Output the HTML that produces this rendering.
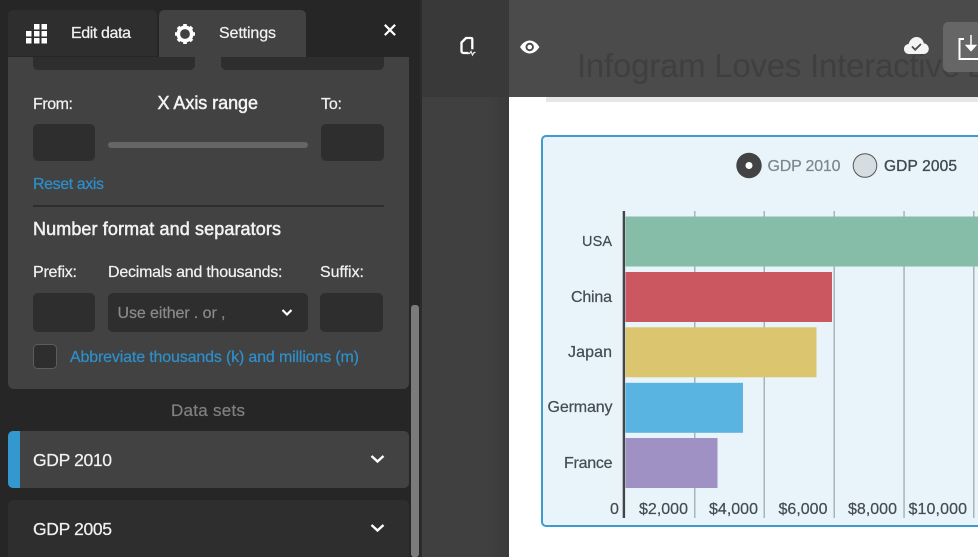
<!DOCTYPE html>
<html><head><meta charset="utf-8"><style>
html,body{margin:0;padding:0;width:978px;height:557px;overflow:hidden;background:#262626}
svg{display:block}
text{font-family:"Liberation Sans",sans-serif;font-size:16px;white-space:pre;stroke-width:.22px}
.w{fill:#f2f2f2;stroke:#f2f2f2}.b{fill:#2e8fca;stroke:#2e8fca}.c{fill:#434c52;stroke:#434c52}
.h{stroke-width:.5px}
</style></head><body>
<svg width="978" height="557" viewBox="0 0 978 557" xmlns="http://www.w3.org/2000/svg">
<defs><linearGradient id="g" x1="0" x2="1" y1="0" y2="0"><stop offset="0" stop-color="#404040"/><stop offset=".75" stop-color="#404040"/><stop offset="1" stop-color="#3a3a3a"/></linearGradient></defs>
<rect width="978" height="557" fill="#262626"/>
<!-- middle column -->
<rect x="420" width="2" height="557" fill="#2b2b2b"/>
<rect x="422" width="87" height="557" fill="url(#g)"/>
<rect x="422" width="87" height="97" fill="#393939"/>
<!-- page -->
<rect x="509" width="469" height="557" fill="#fff"/>
<rect x="546" y="97" width="432" height="5" fill="#e6e6e6"/>
<!-- header overlay -->
<rect x="509" width="469" height="97" fill="#4b4b4b"/>
<text x="577" y="77" style="font-size:33px;stroke:none" fill="#3f3f3f" textLength="383" lengthAdjust="spacing">Infogram Loves Interactive</text>
<text x="967" y="77" style="font-size:33px;stroke:none" fill="#3f3f3f">Data</text>
<rect x="943" y="22" width="50" height="50" rx="5" fill="#686868" fill-opacity=".93"/>
<path d="M964 39h-4.500v20h19" fill="none" stroke="#fff" stroke-width="2"/>
<path d="M971 35v14M966.500 45.500l4.500 5 4.500-5z" fill="#fff" stroke="#fff" stroke-width="1.500"/>
<!-- cloud -->
<path d="M909 54c-3 0-5-2.200-5-5 0-2.700 2-4.800 4.600-5 1-3.800 4-7 8-7 3.700 0 6.500 2.700 7.200 6.200 2.800.3 5 2.700 5 5.700 0 2.800-2.300 5.100-5 5.100z" fill="#f4f4f4"/>
<path d="M912 46.500l3.200 3.200 5.800-5.700" fill="none" stroke="#4b4b4b" stroke-width="1.800"/>
<!-- eye -->
<path d="M520 47c2.500-4 6-6.500 9.700-6.500s7.200 2.500 9.700 6.500c-2.500 4-6 6.500-9.700 6.500s-7.200-2.500-9.700-6.500z" fill="#fff"/>
<circle cx="529.700" cy="47" r="4.200" fill="#4b4b4b"/><circle cx="529.700" cy="47" r="2.300" fill="#fff"/>
<!-- phone -->
<path d="M468.500 53h-5c-1.200 0-2-.8-2-2v-8.500l4.500-4.500h5c.9 0 1.300.5 1.300 1.300v10" fill="none" stroke="#fff" stroke-width="2.300"/>
<path d="M467.500 53.500h2l1.500-2 1.500 3.500 1.500-2.500h1.500" fill="none" stroke="#eee" stroke-width="1.200"/>
<!-- chart -->
<rect x="542" y="136" width="460" height="390" rx="4" fill="#e9f4fa" stroke="#3f9ad0" stroke-width="2"/>
<g fill="#a8b4bb">
<rect x="694" y="211" width="1.500" height="307"/><rect x="763.500" y="211" width="1.500" height="307"/><rect x="833.500" y="211" width="1.500" height="307"/><rect x="903.300" y="211" width="1.500" height="307"/><rect x="973" y="211" width="1.500" height="307"/>
</g>
<rect x="622.700" y="211" width="2.400" height="307" fill="#434649"/>
<rect x="625.500" y="216.500" width="360" height="50" fill="#85bda9"/>
<rect x="625.500" y="272" width="206.500" height="50" fill="#cb5860"/>
<rect x="625.500" y="327.300" width="191" height="50" fill="#dcc56f"/>
<rect x="625.500" y="382.800" width="117.500" height="50" fill="#5ab4e2"/>
<rect x="625.500" y="438" width="92" height="50" fill="#a091c5"/>
<text x="582" y="246" class="c" style="font-size:14.500px" textLength="30">USA</text>
<text x="571" y="302" class="c" textLength="41">China</text>
<text x="568" y="357" class="c" textLength="44">Japan</text>
<text x="547.500" y="412" class="c" textLength="65">Germany</text>
<text x="564" y="468" class="c" textLength="48.500">France</text>
<text x="610" y="514" class="c" textLength="9">0</text>
<text x="639" y="514" class="c" textLength="49">$2,000</text>
<text x="709" y="514" class="c" textLength="49">$4,000</text>
<text x="778.500" y="514" class="c" textLength="49">$6,000</text>
<text x="848" y="514" class="c" textLength="49">$8,000</text>
<text x="908.500" y="514" class="c" textLength="58.500">$10,000</text>
<circle cx="749" cy="165.500" r="12.700" fill="#434343"/><circle cx="749" cy="165.500" r="3.500" fill="#fff"/>
<text x="767.500" y="171" fill="#7b868d" stroke="#7b868d" textLength="73">GDP 2010</text>
<circle cx="865" cy="165.500" r="11.800" fill="#d6dde1" stroke="#555" stroke-width="1"/>
<text x="884" y="171" fill="#3f4a52" textLength="73" stroke="#3f4a52" style="font-size:15.500px;stroke-width:.35px">GDP 2005</text>
<!-- tabs -->
<path d="M8 57V15a5 5 0 0 1 5-5h139a5 5 0 0 1 5 5v42z" fill="#2e2e2e"/>
<path d="M159 57V15a5 5 0 0 1 5-5h137a5 5 0 0 1 5 5v42z" fill="#424242"/>
<g fill="#fff">
<rect x="34" y="24" width="5.500" height="5.500"/><rect x="41.500" y="24" width="5.500" height="5.500"/>
<rect x="26" y="31" width="5.500" height="5.500"/><rect x="34" y="31" width="5.500" height="5.500"/><rect x="41.500" y="31" width="5.500" height="5.500"/>
<rect x="26" y="38" width="5.500" height="5.500"/><rect x="34" y="38" width="5.500" height="5.500"/><rect x="41.500" y="38" width="5.500" height="5.500"/>
</g>
<text x="71" y="38" class="w" textLength="60">Edit data</text>
<text x="219" y="38" class="w" textLength="57">Settings</text>
<!-- gear -->
<circle cx="185" cy="34" r="6.700" fill="none" stroke="#fff" stroke-width="3.600"/>
<g stroke="#fff" stroke-width="3.600" fill="none">
<path d="M185 24v3.500M185 40.500v3.500M175 34h3.500M191.500 34h3.500M178 27l2.400 2.400M189.600 38.600l2.400 2.400M192 27l-2.400 2.400M180.400 38.600L178 41"/>
</g>
<!-- close -->
<path d="M384.800 24.800l10.300 10.300M395.100 24.800L384.800 35.100" stroke="#fff" stroke-width="2.200" fill="none"/>
<!-- panel -->
<path d="M8 57h401v326a6 6 0 0 1-6 6H14a6 6 0 0 1-6-6z" fill="#424242"/>
<path d="M8 56.500h151" stroke="#272727" stroke-width="1"/>
<path d="M33 57h162v8a5 5 0 0 1-5 5H38a5 5 0 0 1-5-5z" fill="#2e2e2e"/>
<path d="M221 57h163v8a5 5 0 0 1-5 5H226a5 5 0 0 1-5-5z" fill="#2e2e2e"/>
<text x="33" y="109" class="w" textLength="40">From:</text>
<text x="157.500" y="109" class="w h" style="font-size:18px" textLength="100.500">X Axis range</text>
<text x="321" y="109" class="w" textLength="21">To:</text>
<rect x="33" y="124" width="62" height="37" rx="5" fill="#2e2e2e"/>
<rect x="321" y="124" width="63" height="37" rx="5" fill="#2e2e2e"/>
<rect x="108" y="142" width="200" height="6" rx="3" fill="#666"/>
<text x="33" y="189" class="b" textLength="71">Reset axis</text>
<rect x="33" y="205" width="351" height="2" fill="#2e2e2e"/>
<text x="33" y="235" class="w h" style="font-size:18px" textLength="248">Number format and separators</text>
<text x="33" y="277" class="w" textLength="44">Prefix:</text>
<text x="108" y="277" class="w" textLength="174.500">Decimals and thousands:</text>
<text x="320" y="277" class="w" textLength="44">Suffix:</text>
<rect x="33" y="293" width="62" height="39" rx="5" fill="#2e2e2e"/>
<rect x="108" y="293" width="200" height="39" rx="5" fill="#2e2e2e"/>
<rect x="320" y="293" width="63" height="39" rx="5" fill="#2e2e2e"/>
<text x="117.500" y="318" fill="#8a8a8a" stroke="#8a8a8a" textLength="108">Use either . or ,</text>
<path d="M282.500 310l4.500 4.500 4.500-4.500" fill="none" stroke="#fff" stroke-width="2.200"/>
<rect x="33.500" y="344.500" width="23" height="24" rx="4" fill="#2e2e2e" stroke="#5c5c5c"/>
<text x="70" y="362" class="b" textLength="289">Abbreviate thousands (k) and millions (m)</text>
<rect x="411" y="305" width="8" height="252" rx="3" fill="#7b7b7b"/>
<text x="171" y="416" fill="#808080" stroke="#808080" style="font-size:17px" textLength="74">Data sets</text>
<!-- data sets -->
<rect x="8" y="431" width="401" height="57" rx="5" fill="#424242"/>
<path d="M20 431h-7a5 5 0 0 0-5 5v47a5 5 0 0 0 5 5h7z" fill="#3498d0"/>
<text x="33" y="466" class="w" style="font-size:17.500px" textLength="79">GDP 2010</text>
<path d="M371.500 456l6 5.500 6-5.500" fill="none" stroke="#fff" stroke-width="2.400"/>
<rect x="8" y="500" width="401" height="70" rx="5" fill="#2e2e2e"/>
<text x="33" y="535" class="w" style="font-size:17.500px" textLength="79">GDP 2005</text>
<path d="M371.500 525l6 5.500 6-5.500" fill="none" stroke="#fff" stroke-width="2.400"/>
</svg>
</body></html>
